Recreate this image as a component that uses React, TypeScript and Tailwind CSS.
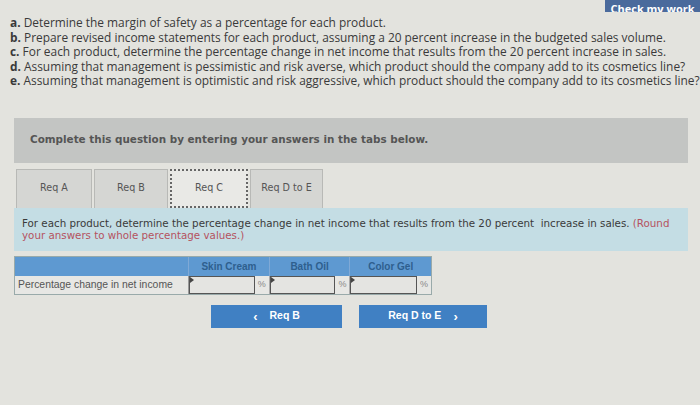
import React from 'react';

const questions = [
  ['a.', 'Determine the margin of safety as a percentage for each product.'],
  ['b.', 'Prepare revised income statements for each product, assuming a 20 percent increase in the budgeted sales volume.'],
  ['c.', 'For each product, determine the percentage change in net income that results from the 20 percent  increase in sales.'],
  ['d.', 'Assuming that management is pessimistic and risk averse, which product should the company add to its cosmetics line?'],
  ['e.', 'Assuming that management is optimistic and risk aggressive, which product should the company add to its cosmetics line?'],
];

const tabs = [
  { label: 'Req A', w: 'w-[76px]' },
  { label: 'Req B', w: 'w-[74px]' },
  { label: 'Req C', w: 'w-[78px]', active: true },
  { label: 'Req D to E', w: 'w-[73px]' },
];

const products = ['Skin Cream', 'Bath Oil', 'Color Gel'];

const Marker = () => (
  <span className="absolute left-0 top-0 w-0 h-0 border-t-[3px] border-b-[3px] border-l-[4px] border-t-transparent border-b-transparent border-l-[#444]" />
);

export default function App() {
  return (
    <div
      className="w-[700px] h-[405px] overflow-hidden bg-[#e3e3de] text-[#333]"
      style={{ fontFamily: '"Open Sans", "DejaVu Sans", sans-serif' }}
    >
      {/* Check my work */}
      <div className="flex justify-end h-[12px]">
        <div className="w-[95px] h-[12px] bg-[#4a6a9c] overflow-hidden flex items-end justify-center">
          <span className="text-white text-[11px] font-bold leading-none -mb-[2px]">Check my work</span>
        </div>
      </div>

      {/* Requirements */}
      <div className="pl-[10px] pt-[3px] text-[11.9px] leading-[14.5px] whitespace-nowrap text-[#3a3a3a]">
        {questions.map(([k, t]) => (
          <div key={k}>
            <span className="font-bold">{k}</span> {t}
          </div>
        ))}
      </div>

      <div className="mx-[14px] mt-[30px] w-[674px]" style={{ fontFamily: '"DejaVu Sans", Verdana, sans-serif' }}>
        {/* Banner */}
        <div className="h-[45px] bg-[#c3c5c3] flex items-center pl-[16px]">
          <span className="text-[10.4px] font-bold text-[#555]">
            Complete this question by entering your answers in the tabs below.
          </span>
        </div>

        {/* Tabs */}
        <div className="flex mt-[6px] h-[39px] pl-[2px] gap-[2px]">
          {tabs.map((t) =>
            t.active ? (
              <div
                key={t.label}
                className={`${t.w} h-full bg-[#e9e9e6] border-[2px] border-dotted border-[#666] flex items-center justify-center text-[9.6px] text-[#555]`}
              >
                {t.label}
              </div>
            ) : (
              <div
                key={t.label}
                className={`${t.w} h-full bg-[#d5d6d3] border border-[#b8b9b6] border-b-0 flex items-center justify-center text-[9.6px] text-[#555]`}
              >
                {t.label}
              </div>
            )
          )}
        </div>

        {/* Instructions */}
        <div className="h-[43px] bg-[#c4dde4] pl-[8px] pr-[10px] pt-[9px] text-[10.3px] leading-[12.5px] text-[#3a3a3a]">
          For each product, determine the percentage change in net income that results from the 20 percent&nbsp; increase in sales.{' '}
          <span className="text-[#b5525f]">(Round your answers to whole percentage values.)</span>
        </div>

        {/* Table */}
        <div className="mt-[5px] w-[418px] border border-[#9aa]" style={{ fontFamily: '"Liberation Sans", Arial, sans-serif' }}>
          <div className="flex h-[19px] bg-[#5e99d1]">
            <div className="w-[175px] border-r border-[#7fa9d6]" />
            {products.map((p) => (
              <div
                key={p}
                className="w-[81px] border-r border-[#7fa9d6] last:border-r-0 flex items-center justify-center font-bold text-[#2e5f8e] text-[10px]"
              >
                {p}
              </div>
            ))}
          </div>
          <div className="flex h-[18px] bg-[#e7e7e4]">
            <div className="w-[175px] border-r border-[#999] flex items-center pl-[3px] text-[#555] text-[10.4px]">
              Percentage change in net income
            </div>
            {products.map((p) => (
              <div key={p} className="w-[81px] flex border-r border-[#aaa] last:border-r-0">
                <div className="relative flex-1 border border-[#555] bg-[#e4e4e1]">
                  <Marker />
                </div>
                <div className="w-[14px] flex items-center justify-center text-[#888] text-[9px]">%</div>
              </div>
            ))}
          </div>
        </div>

        {/* Navigation */}
        <div className="flex mt-[10px] ml-[197px] gap-[17px]" style={{ fontFamily: '"Liberation Sans", Arial, sans-serif' }}>
          <button className="w-[131px] h-[23px] bg-[#4080c3] text-white font-bold text-[10.5px] flex items-center justify-center gap-[12px]">
            <span className="text-[13px] leading-none">&lsaquo;</span>
            <span>Req B</span>
          </button>
          <button className="w-[128px] h-[23px] bg-[#4080c3] text-white font-bold text-[10.5px] flex items-center justify-center gap-[12px]">
            <span>Req D to E</span>
            <span className="text-[13px] leading-none">&rsaquo;</span>
          </button>
        </div>
      </div>
    </div>
  );
}
